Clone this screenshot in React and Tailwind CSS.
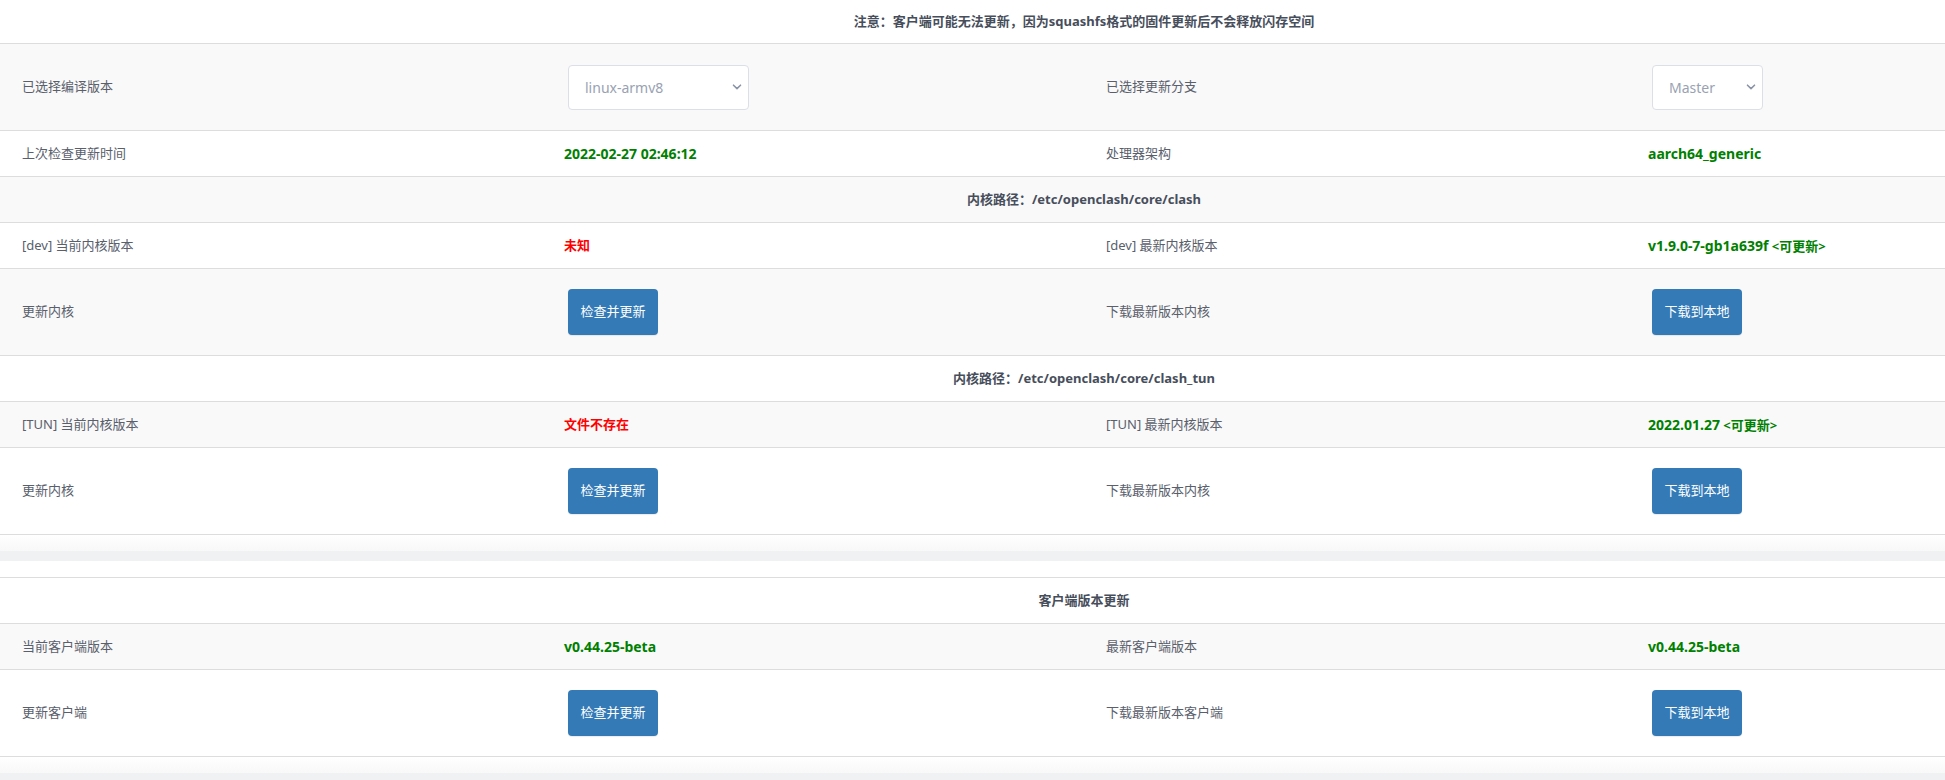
import React from "react";

const font = "font-['Noto_Sans','Noto_Sans_CJK_SC',sans-serif]";

const Chevron = () => (
  <svg
    viewBox="0 0 10 6"
    className="pointer-events-none absolute right-[7px] top-1/2 h-[6px] w-[10px] -translate-y-1/2"
    fill="none"
    stroke="#8a94a6"
    strokeWidth="1.6"
    strokeLinecap="round"
    strokeLinejoin="round"
  >
    <path d="M1.5 1.2 L5 4.6 L8.5 1.2" />
  </svg>
);

const Select = ({ value, width }) => (
  <div className={`relative ml-1 ${width}`}>
    <select
      defaultValue={value}
      className="h-[45px] w-full appearance-none rounded-[4px] border border-[#dcdfe6] bg-white pl-[16px] text-[14px] text-[#98a2b2] outline-none"
    >
      <option>{value}</option>
    </select>
    <Chevron />
  </div>
);

const Btn = ({ children }) => (
  <button className="ml-1 h-[46px] w-[90px] rounded-[4px] bg-[#337ab7] text-[13px] text-white shadow-[0_1px_1px_rgba(0,0,0,0.08)]">
    {children}
  </button>
);

const Cell = ({ children }) => (
  <div className="flex items-center px-[22px]">{children}</div>
);

const Row = ({ cells, gray, tall }) => (
  <div
    className={`grid grid-cols-[542px_542px_542px_542px] border-t border-[#dddddd] ${tall ? "h-[87px]" : "h-[46px]"} ${gray ? "bg-[#f9f9f9]" : "bg-white"}`}
  >
    {cells.map((c, i) => (
      <Cell key={i}>{c}</Cell>
    ))}
  </div>
);

const Title = ({ children, gray, first }) => (
  <div
    className={`flex items-center justify-center text-[13px] font-bold text-[#474e5b] ${first ? "h-[43px]" : "h-[46px] border-t border-[#dddddd]"} ${gray ? "bg-[#f9f9f9]" : "bg-white"}`}
  >
    {children}
  </div>
);

const Label = ({ children }) => <span className="text-[13px] text-[#59606c]">{children}</span>;
const Green = ({ children, more }) => (
  <span className="text-[14px] font-bold text-[#008000]">
    {children}
    {more && <span className="text-[13px]"> &lt;可更新&gt;</span>}
  </span>
);
const Red = ({ children }) => <span className="text-[13px] font-bold text-[#ff0000]">{children}</span>;

const Gap = () => (
  <>
    <div className="h-[17px] border-t border-[#dddddd] bg-linear-to-b from-white to-[#f8f8f9]" />
    <div className="h-[10px] bg-[#f0f1f3]" />
  </>
);

export default function App() {
  return (
    <div className={`h-[780px] w-full overflow-hidden bg-white ${font}`}>
      <div className="w-[2168px]">
        <Title first>注意：客户端可能无法更新，因为squashfs格式的固件更新后不会释放闪存空间</Title>
        <Row
          gray
          tall
          cells={[
            <Label>已选择编译版本</Label>,
            <Select value="linux-armv8" width="w-[181px]" />,
            <Label>已选择更新分支</Label>,
            <Select value="Master" width="w-[111px]" />,
          ]}
        />
        <Row
          cells={[
            <Label>上次检查更新时间</Label>,
            <Green>2022-02-27 02:46:12</Green>,
            <Label>处理器架构</Label>,
            <Green>aarch64_generic</Green>,
          ]}
        />
        <Title gray>内核路径：/etc/openclash/core/clash</Title>
        <Row
          cells={[
            <Label>[dev] 当前内核版本</Label>,
            <Red>未知</Red>,
            <Label>[dev] 最新内核版本</Label>,
            <Green more>v1.9.0-7-gb1a639f</Green>,
          ]}
        />
        <Row
          gray
          tall
          cells={[
            <Label>更新内核</Label>,
            <Btn>检查并更新</Btn>,
            <Label>下载最新版本内核</Label>,
            <Btn>下载到本地</Btn>,
          ]}
        />
        <Title>内核路径：/etc/openclash/core/clash_tun</Title>
        <Row
          gray
          cells={[
            <Label>[TUN] 当前内核版本</Label>,
            <Red>文件不存在</Red>,
            <Label>[TUN] 最新内核版本</Label>,
            <Green more>2022.01.27</Green>,
          ]}
        />
        <Row
          tall
          cells={[
            <Label>更新内核</Label>,
            <Btn>检查并更新</Btn>,
            <Label>下载最新版本内核</Label>,
            <Btn>下载到本地</Btn>,
          ]}
        />
        <Gap />
        <div className="h-[16px] bg-white" />
        <Title>客户端版本更新</Title>
        <Row
          gray
          cells={[
            <Label>当前客户端版本</Label>,
            <Green>v0.44.25-beta</Green>,
            <Label>最新客户端版本</Label>,
            <Green>v0.44.25-beta</Green>,
          ]}
        />
        <Row
          tall
          cells={[
            <Label>更新客户端</Label>,
            <Btn>检查并更新</Btn>,
            <Label>下载最新版本客户端</Label>,
            <Btn>下载到本地</Btn>,
          ]}
        />
        <Gap />
      </div>
    </div>
  );
}
